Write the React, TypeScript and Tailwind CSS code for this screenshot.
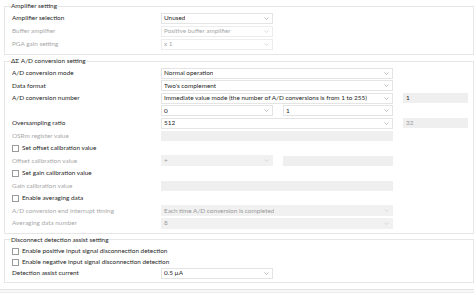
import React from 'react';

function Chevron({ dim }: { dim?: boolean }) {
  return (
    <svg width="5" height="3" viewBox="0 0 5 3" className="shrink-0">
      <path d="M0.5 0.5 L2.5 2.5 L4.5 0.5" fill="none" stroke={dim ? '#cfcfcf' : '#a8a8a8'} strokeWidth="0.7" />
    </svg>
  );
}

function Select({ text, w, disabled, filled }: { text: string; w: string; disabled?: boolean; filled?: boolean }) {
  return (
    <div
      className={`${w} h-[11px] flex items-center justify-between pl-[2px] pr-[3px] border ${
        filled ? 'bg-[#f1f1f1] border-[#f1f1f1] text-[#9a9a9a]' : disabled ? 'bg-white border-[#ededed] text-[#a8a8a8]' : 'bg-white border-[#e4e4e4] text-[#262626]'
      }`}
    >
      <span className="whitespace-nowrap overflow-hidden">{text}</span>
      <Chevron dim={disabled || filled} />
    </div>
  );
}

function Field({ text, w, dim }: { text: string; w: string; dim?: boolean }) {
  return (
    <div className={`${w} h-[10px] flex items-center pl-[3px] bg-[#efefef] ${dim ? 'text-[#9a9a9a]' : 'text-[#262626]'}`}>
      {text}
    </div>
  );
}

function Row({ label, dim, h = 'h-[12.5px]', children }: { label?: string; dim?: boolean; h?: string; children?: React.ReactNode }) {
  return (
    <div className={`flex items-center ${h}`}>
      <div className={`w-[149px] shrink-0 whitespace-nowrap ${dim ? 'text-[#a8a8a8]' : 'text-[#262626]'}`}>{label}</div>
      <div className="flex items-center">{children}</div>
    </div>
  );
}

function Check({ label, h = 'h-[12.5px]' }: { label: string; h?: string }) {
  return (
    <div className={`flex items-center gap-[3px] ${h} text-[#262626]`}>
      <span className="w-[7px] h-[7px] border border-[#9a9a9a] bg-white shrink-0" />
      <span>{label}</span>
    </div>
  );
}

function Group({ title, children, pb }: { title: string; children: React.ReactNode; pb: string }) {
  return (
    <fieldset className={`border border-[#e6e6e6] pl-[7px] pr-0 ${pb} m-0 min-w-0`}>
      <legend className="px-0 h-[12px] leading-[12px] text-[#262626] -ml-[1px]">{title}</legend>
      {children}
    </fieldset>
  );
}

export default function App() {
  return (
    <div className="w-[474px] h-[296px] bg-white overflow-hidden font-['Lato','Noto_Sans',sans-serif] text-[6.4px] leading-none">
      <div className="pl-[4px] w-[474px]">
        <Group title="Amplifier setting" pb="pb-[3px]">
          <Row label="Amplifier selection" h="h-[13px]">
            <Select text="Unused" w="w-[112px]" />
          </Row>
          <Row label="Buffer amplifier" dim h="h-[13px]">
            <Select text="Positive buffer amplifier" w="w-[112px]" disabled />
          </Row>
          <Row label="PGA gain setting" dim h="h-[13px]">
            <Select text="x 1" w="w-[112px]" disabled />
          </Row>
        </Group>

        <Group title="ΔΣ A/D conversion setting" pb="pb-[3px]">
          <Row label="A/D conversion mode">
            <Select text="Normal operation" w="w-[232px]" />
          </Row>
          <Row label="Data format">
            <Select text="Two's complement" w="w-[232px]" />
          </Row>
          <Row label="A/D conversion number">
            <Select text="Immediate value mode (the number of A/D conversions is from 1 to 255)" w="w-[232px]" />
            <div className="w-[10px]" />
            <Field text="1" w="w-[65px]" />
          </Row>
          <Row>
            <Select text="0" w="w-[112px]" />
            <div className="w-[10px]" />
            <Select text="1" w="w-[110px]" />
          </Row>
          <Row label="Oversampling ratio">
            <Select text="512" w="w-[232px]" />
            <div className="w-[10px]" />
            <Field text="32" w="w-[65px]" dim />
          </Row>
          <Row label="OSRm register value" dim>
            <Field text="" w="w-[232px]" />
          </Row>
          <Check label="Set offset calibration value" />
          <Row label="Offset calibration value" dim>
            <Select text="+" w="w-[112px]" filled />
            <div className="w-[10px]" />
            <Field text="" w="w-[110px]" />
          </Row>
          <Check label="Set gain calibration value" />
          <Row label="Gain calibration value" dim>
            <Field text="" w="w-[232px]" />
          </Row>
          <Check label="Enable averaging data" />
          <Row label="A/D conversion end interrupt timing" dim>
            <Select text="Each time A/D conversion is completed" w="w-[232px]" filled />
          </Row>
          <Row label="Averaging data number" dim>
            <Select text="8" w="w-[232px]" filled />
          </Row>
        </Group>

        <Group title="Disconnect detection assist setting" pb="pb-[2px]">
          <Check label="Enable positive input signal disconnection detection" h="h-[11px]" />
          <Check label="Enable negative input signal disconnection detection" h="h-[11px]" />
          <Row label="Detection assist current" h="h-[12px]">
            <Select text="0.5 µA" w="w-[112px]" />
          </Row>
        </Group>
      </div>
      <div className="mt-[6px] h-[3px] border-t border-[#e2e2e2] bg-[#f7f7f7]" />
      <div className="border-t border-[#ececec]" />
    </div>
  );
}
